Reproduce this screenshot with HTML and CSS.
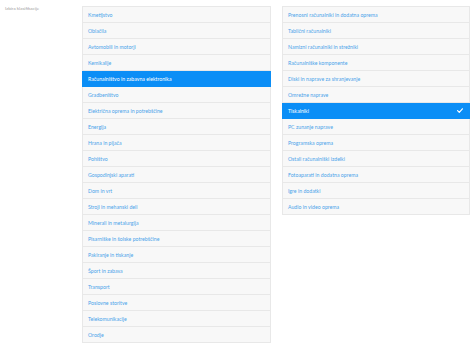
FILE: index.html
```html
<!DOCTYPE html>
<html>
<head>
<meta charset="utf-8">
<link rel="stylesheet" href="styles.css">
</head>
<body>
<div class="page">
  <div class="label">Izbira klasifikacije</div>
  <ul class="list left">
    <li>Kmetijstvo</li>
    <li>Oblačila</li>
    <li>Avtomobili in motorji</li>
    <li>Kemikalije</li>
    <li class="sel">Računalništvo in zabavna elektronika</li>
    <li>Gradbeništvo</li>
    <li>Električna oprema in potrebščine</li>
    <li>Energija</li>
    <li>Hrana in pijača</li>
    <li>Pohištvo</li>
    <li>Gospodinjski aparati</li>
    <li>Dom in vrt</li>
    <li>Stroji in mehanski deli</li>
    <li>Minerali in metalurgija</li>
    <li>Pisarniške in šolske potrebščine</li>
    <li>Pakiranje in tiskanje</li>
    <li>Šport in zabava</li>
    <li>Transport</li>
    <li>Poslovne storitve</li>
    <li>Telekomunikacije</li>
    <li>Orodje</li>
  </ul>
  <ul class="list right">
    <li>Prenosni računalniki in dodatna oprema</li>
    <li>Tablični računalniki</li>
    <li>Namizni računalniki in strežniki</li>
    <li>Računalniške komponente</li>
    <li>Diski in naprave za shranjevanje</li>
    <li>Omrežne naprave</li>
    <li class="sel">Tiskalniki<svg class="check" viewBox="0 0 10 8" width="6" height="5"><path d="M1 4.2 L3.8 7 L9 1.2" fill="none" stroke="#fff" stroke-width="2" stroke-linecap="round" stroke-linejoin="round"/></svg></li>
    <li>PC zunanje naprave</li>
    <li>Programska oprema</li>
    <li>Ostali računalniški izdelki</li>
    <li>Fotoaparati in dodatna oprema</li>
    <li>Igre in dodatki</li>
    <li>Audio in video oprema</li>
  </ul>
</div>
</body>
</html>
```

FILE: styles.css
```css
html, body {
  margin: 0;
  padding: 0;
  background: #ffffff;
}
.page {
  display: flex;
  align-items: flex-start;
  padding-top: 6px;
  font-family: Lato, "Open Sans", sans-serif;
}
.label {
  width: 82px;
  box-sizing: border-box;
  padding-left: 5px;
  padding-top: 0;
  font-size: 4.5px;
  line-height: 5px;
  color: #a3a3a3;
}
.list {
  list-style: none;
  margin: 0;
  padding: 0;
  box-sizing: border-box;
  border-top: 1px solid #e8e8e8;
}
.left {
  width: 189px;
}
.right {
  width: 188px;
  margin-left: 11px;
}
.list li {
  height: 16px;
  box-sizing: border-box;
  border-left: 1px solid #e8e8e8;
  border-right: 1px solid #e8e8e8;
  border-bottom: 1px solid #e8e8e8;
  background: #f8f8f8;
  color: #4aa3ea;
  font-size: 5.2px;
  padding-left: 5px;
  padding-right: 6px;
  display: flex;
  align-items: center;
  justify-content: space-between;
}
.list li.sel {
  background: #0b8ef6;
  border-color: #0b8ef6;
  color: #ffffff;
}
.check {
  display: block;
}
```
